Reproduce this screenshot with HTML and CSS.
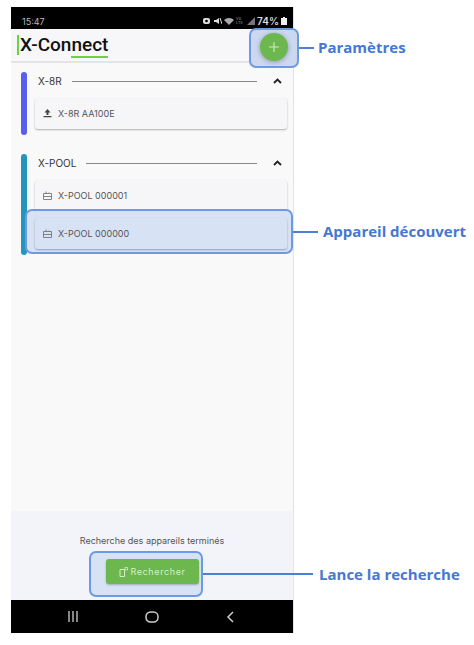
FILE: index.html
```html
<!DOCTYPE html>
<html lang="fr">
<head>
  <meta charset="UTF-8">
  <meta name="viewport" content="width=device-width, initial-scale=1.0">
  <title>X-Connect</title>
  <link rel="stylesheet" href="styles.css">
</head>
<body>
  <div class="phone">
    <div class="status">
      <span class="heure">15:47</span>
      <div class="status-icons">
        <svg width="9" height="8" viewBox="0 0 9 8"><rect x="1" y="1" width="7" height="6" rx="2" fill="#ddd"/><circle cx="4.5" cy="4" r="1.3" fill="#000"/></svg>
        <svg width="9" height="8" viewBox="0 0 9 8"><path d="M1 3h2l3-2v6L3 5H1z" fill="#ddd"/><path d="M7 1l2 6" stroke="#ddd"/></svg>
        <svg width="10" height="8" viewBox="0 0 10 8"><path d="M0 3a7 7 0 0 1 10 0L5 8z" fill="#aaa"/></svg>
        <span class="lte">Vo LTE</span>
        <svg width="8" height="8" viewBox="0 0 8 8"><path d="M0 8L8 0v8z" fill="#777"/></svg>
        <span class="batterie">74%</span>
        <svg width="6" height="8" viewBox="0 0 6 8"><path d="M2 0h2v1h2v7H0V1h2z" fill="#eee"/></svg>
      </div>
    </div>

    <header class="entete">
      <div class="logo">X-Con<span class="logo-vert">nect</span></div>
      <button class="fab" type="button">
        <svg width="10" height="10" viewBox="0 0 10 10"><path d="M5 0v10M0 5h10" stroke="#cfe8bd" stroke-width="1.2"/></svg>
      </button>
    </header>

    <main class="liste">
      <section class="groupe">
        <div class="barre barre-bleue"></div>
        <div class="groupe-corps">
          <div class="groupe-titre">
            <span>X-8R</span>
            <div class="trait"></div>
            <svg class="chevron" width="9" height="6" viewBox="0 0 9 6"><path d="M1 5l3.500-3.500L8 5" fill="none" stroke="#222" stroke-width="1.800"/></svg>
          </div>
          <div class="carte">
            <svg width="9" height="9" viewBox="0 0 9 9"><path d="M4.500 0L7.500 3.500H5.500V6H3.500V3.500H1.500zM0.500 7h8v1.300h-8z" fill="#444"/></svg>
            <span>X-8R AA100E</span>
          </div>
        </div>
      </section>

      <section class="groupe groupe-pool">
        <div class="barre barre-turquoise"></div>
        <div class="groupe-corps">
          <div class="groupe-titre">
            <span>X-POOL</span>
            <div class="trait"></div>
            <svg class="chevron" width="9" height="6" viewBox="0 0 9 6"><path d="M1 5l3.500-3.500L8 5" fill="none" stroke="#222" stroke-width="1.800"/></svg>
          </div>
          <div class="carte">
            <svg width="9" height="9" viewBox="0 0 9 9"><path d="M0.500 2.500h8v6h-8zM0.500 5.500h8M3 2.500V0.500M6 2.500V1.500" fill="none" stroke="#777" stroke-width="0.900"/></svg>
            <span>X-POOL 000001</span>
          </div>
          <div class="carte carte-active">
            <svg width="9" height="9" viewBox="0 0 9 9"><path d="M0.500 2.500h8v6h-8zM0.500 5.500h8M3 2.500V0.500M6 2.500V1.500" fill="none" stroke="#777" stroke-width="0.900"/></svg>
            <span>X-POOL 000000</span>
          </div>
        </div>
      </section>
    </main>

    <div class="recherche">
      <p>Recherche des appareils terminés</p>
      <button class="btn-recherche" type="button">
        <svg width="9" height="10" viewBox="0 0 9 10"><path d="M1 2.500h4.500v7H1z" fill="none" stroke="#d5ecc8" stroke-width="1"/><path d="M6 0.500h2.500V3H6z" fill="none" stroke="#d5ecc8" stroke-width="0.800"/></svg>
        Rechercher
      </button>
    </div>

    <nav class="navbar">
      <svg width="12" height="11" viewBox="0 0 12 11"><path d="M2 0v11M6 0v11M10 0v11" stroke="#ccc" stroke-width="1.300"/></svg>
      <svg width="14" height="12" viewBox="0 0 14 12"><rect x="1" y="1" width="12" height="10" rx="4.500" fill="none" stroke="#ccc" stroke-width="1.500"/></svg>
      <svg width="8" height="12" viewBox="0 0 8 12"><path d="M7 1L2 6l5 5" fill="none" stroke="#ccc" stroke-width="1.500"/></svg>
    </nav>
  </div>

  <!-- annotations par-dessus la capture -->
  <div class="zone zone-param"></div>
  <div class="fil fil-param"></div>
  <span class="legende legende-param">Paramètres</span>

  <div class="zone zone-appareil"></div>
  <div class="fil fil-appareil"></div>
  <span class="legende legende-appareil">Appareil découvert</span>

  <div class="zone zone-recherche"></div>
  <div class="fil fil-recherche"></div>
  <span class="legende legende-recherche">Lance la recherche</span>
</body>
</html>
```

FILE: styles.css
```css
body {
  margin: 0;
  height: 645px;
  position: relative;
  overflow: hidden;
  background: #fff;
  font-family: Inter, "Liberation Sans", sans-serif;
}

.phone {
  width: 282px;
  height: 626px;
  margin-left: 11px;
  position: relative;
  top: 7px;
  display: flex;
  flex-direction: column;
  background: #f9f9fa;
  box-shadow: 1px 0 0 #e4e4e6;
}

/* barre de statut */
.status {
  height: 22px;
  flex: none;
  background: #000;
  display: flex;
  align-items: flex-end;
  justify-content: space-between;
  padding: 0 6px 2px 11px;
  box-sizing: border-box;
  color: #bbb;
  font-size: 9px;
}
.status-icons {
  display: flex;
  align-items: center;
  gap: 2px;
}
.lte {
  font-size: 4px;
  width: 9px;
  line-height: 4px;
  color: #999;
}
.batterie {
  color: #ddd;
  font-size: 10px;
  font-weight: 600;
}

.entete {
  height: 34px;
  flex: none;
  display: flex;
  align-items: center;
  justify-content: space-between;
  padding: 0 5px 0 6px;
  box-sizing: border-box;
  background: #f7f7f9;
  border-bottom: 2px solid #e4e4e6;
}
.logo {
  border-left: 2px solid #6fd13c;
  padding-left: 1px;
  font-size: 19px;
  line-height: 20px;
  font-weight: 500;
  color: #111;
  font-family: Roboto, "Liberation Sans", sans-serif;
}
.logo-vert {
  border-bottom: 2px solid #6fd13c;
}
.fab {
  width: 28px;
  height: 28px;
  margin-top: 4px;
  border: none;
  border-radius: 50%;
  padding: 0;
  background: #6cb84f;
  box-shadow: 0 1px 5px rgba(0,0,0,0.3);
  display: flex;
  align-items: center;
  justify-content: center;
  position: relative;
  z-index: 2;
}

/* liste des appareils */
.liste {
  flex: 1;
  padding: 9px 6px 0 10px;
  display: flex;
  flex-direction: column;
  gap: 19px;
}
.groupe {
  display: flex;
  gap: 8px;
}
.barre {
  width: 6px;
  flex: none;
  border-radius: 3px;
}
.barre-bleue {
  background: #5560ee;
}
.barre-turquoise {
  background: #2496bd;
}
.groupe-corps {
  flex: 1;
  min-width: 0;
  padding-bottom: 6px;
}
.groupe-titre {
  height: 18px;
  display: flex;
  align-items: center;
  gap: 10px;
  font-size: 10px;
  color: #333;
  margin-bottom: 8px;
  padding-left: 3px;
  padding-right: 5px;
}
.trait {
  flex: 1;
  height: 1px;
  background: #888;
}
.chevron {
  margin-left: 6px;
}
.carte {
  height: 31px;
  box-sizing: border-box;
  display: flex;
  align-items: center;
  gap: 6px;
  padding-left: 8px;
  margin-bottom: 7px;
  font-size: 9px;
  color: #555;
  background: #f6f6f8;
  border-radius: 3px;
  box-shadow: 0 1px 2px rgba(0,0,0,0.3);
}
.carte:last-child {
  margin-bottom: 0;
}
.carte-active {
  background: #d8e2f5;
  position: relative;
  z-index: 2;
}

.recherche {
  height: 89px;
  flex: none;
  box-sizing: border-box;
  padding-top: 24px;
  background: #f3f4f9;
  display: flex;
  flex-direction: column;
  align-items: center;
}
.recherche p {
  margin: 0 0 12px;
  font-size: 9px;
  line-height: 12px;
  color: #555;
}
.btn-recherche {
  width: 93px;
  height: 25px;
  border: none;
  border-radius: 3px;
  background: #6cb84f;
  color: #d5ecc8;
  font-family: inherit;
  font-size: 9px;
  letter-spacing: 0.6px;
  display: flex;
  align-items: center;
  justify-content: center;
  gap: 3px;
  box-shadow: 0 1px 2px rgba(0,0,0,0.25);
  position: relative;
  z-index: 2;
}

.navbar {
  height: 33px;
  flex: none;
  background: #000;
  display: flex;
  align-items: center;
  justify-content: space-around;
  padding: 0 26px 0 23px;
}

/* annotations */
.zone {
  position: absolute;
  box-sizing: border-box;
  border: 2px solid #6d9be3;
  border-radius: 7px;
  background: #d8e2f5;
}
.zone-param {
  left: 249px;
  top: 28px;
  width: 50px;
  height: 40px;
  background: #ccd8f0;
}
.zone-appareil {
  left: 25px;
  top: 209px;
  width: 268px;
  height: 45px;
}
.zone-recherche {
  left: 89px;
  top: 551px;
  width: 114px;
  height: 46px;
}
.fil {
  position: absolute;
  height: 2px;
  background: #4f80d8;
}
.fil-param {
  left: 299px;
  top: 47px;
  width: 15px;
}
.fil-appareil {
  left: 293px;
  top: 231px;
  width: 25px;
}
.fil-recherche {
  left: 203px;
  top: 573px;
  width: 110px;
}
.legende {
  position: absolute;
  font-family: "Open Sans", "Liberation Sans", sans-serif;
  font-size: 15px;
  line-height: 18px;
  font-weight: 700;
  color: #4677d3;
  white-space: nowrap;
}
.legende-param {
  left: 318px;
  top: 38px;
}
.legende-appareil {
  left: 323px;
  top: 222px;
}
.legende-recherche {
  left: 319px;
  top: 565px;
}
```
